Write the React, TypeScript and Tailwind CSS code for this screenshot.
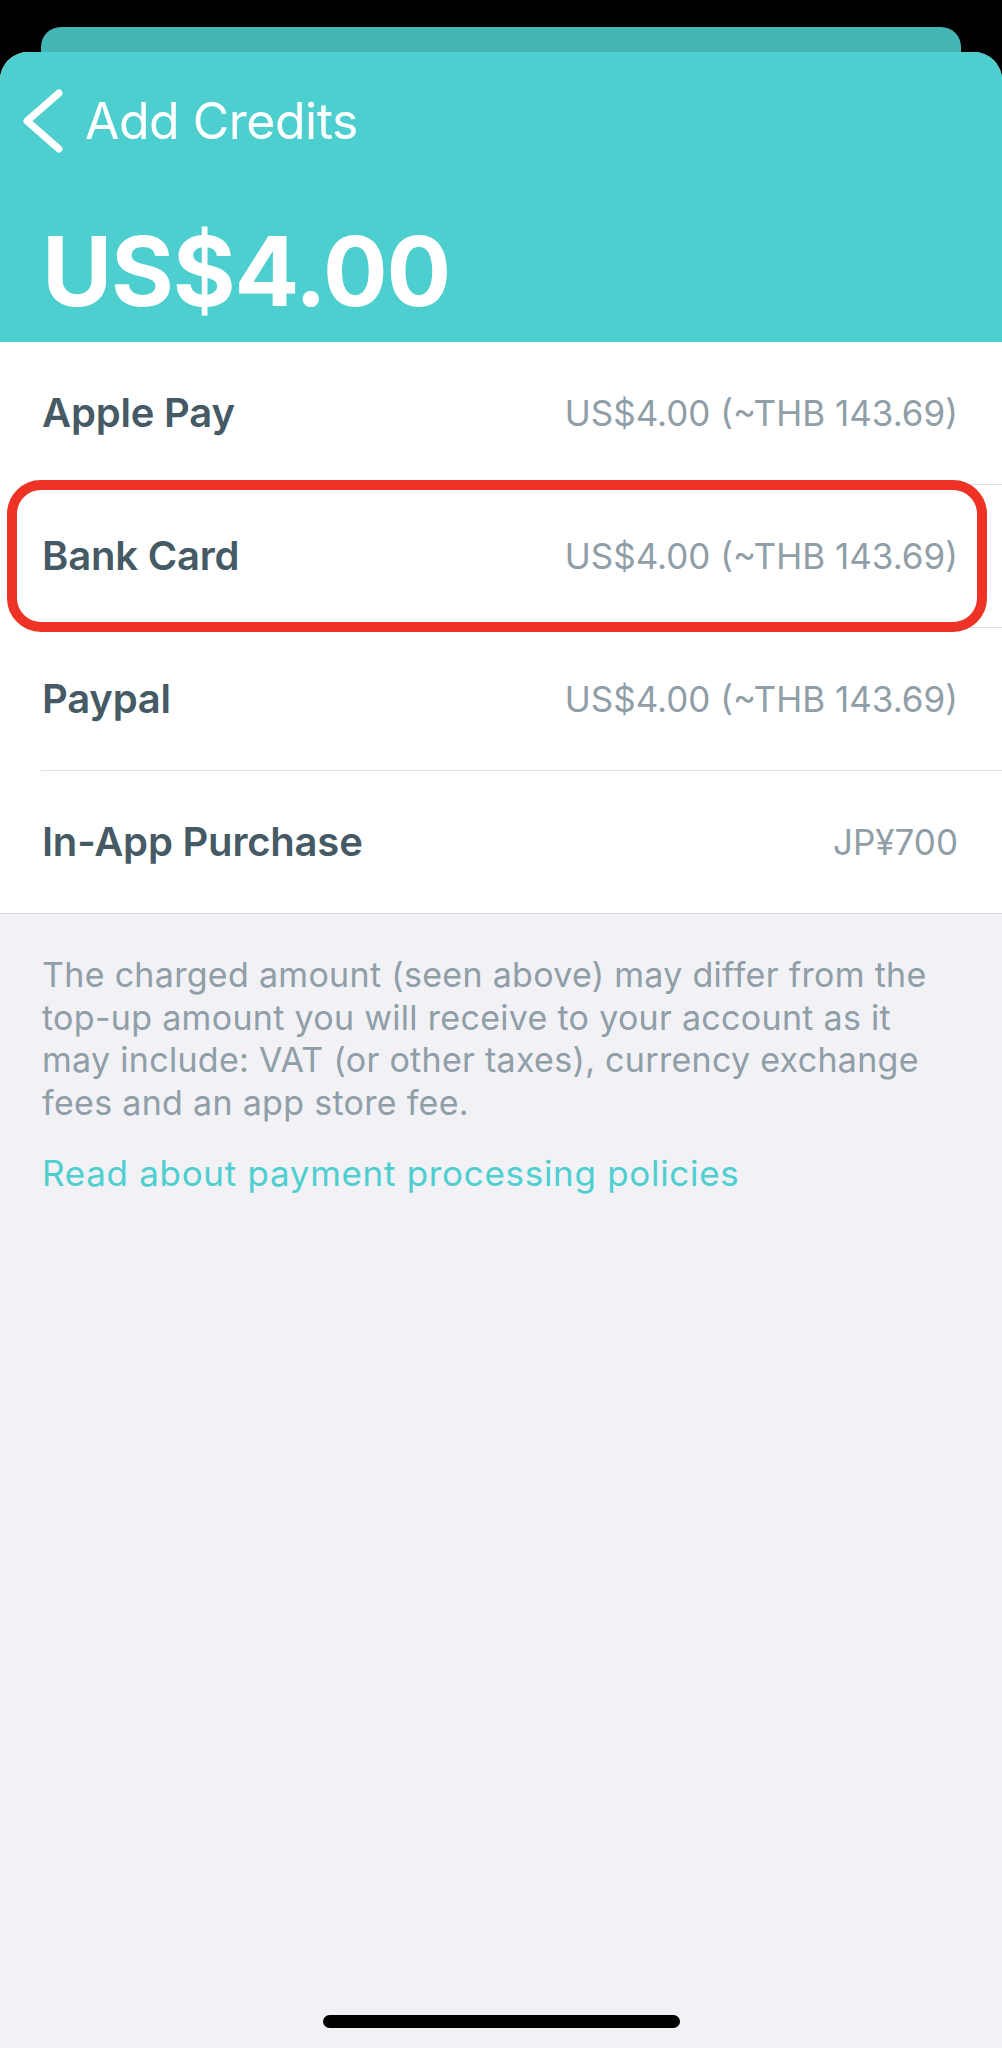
const rows = [
  { label: "Apple Pay", value: "US$4.00 (~THB 143.69)" },
  { label: "Bank Card", value: "US$4.00 (~THB 143.69)", marked: true },
  { label: "Paypal", value: "US$4.00 (~THB 143.69)" },
  { label: "In-App Purchase", value: "JP¥700" },
];

const App = () => {
  return (
    <div className="flex h-[2048px] w-[1002px] flex-col bg-black font-['Inter','Liberation_Sans',sans-serif]">
      {/* Stacked sheet behind */}
      <div className="mx-[41px] mt-[27px] h-[25px] rounded-t-[20px] bg-[#44b6b6]"></div>

      {/* Sheet */}
      <div className="flex flex-1 flex-col overflow-hidden rounded-t-[28px] bg-[#f1f1f6]">
        {/* Header */}
        <div className="flex h-[290px] flex-col bg-[#4dcfd0] text-white">
          <div className="flex items-center pl-[22px] pt-[37px]">
            <svg width="42" height="64" viewBox="0 0 42 64" fill="none">
              <path
                d="M37 4 L5 32 L37 60"
                stroke="white"
                strokeWidth="7"
                strokeLinecap="round"
                strokeLinejoin="round"
              />
            </svg>
            <span className="ml-[21px] text-[50px] leading-none tracking-[-0.5px]">
              Add Credits
            </span>
          </div>
          <div className="mt-[70px] pl-[42px] text-[96px] font-bold leading-none tracking-[-1.2px]">
            US$4.00
          </div>
        </div>

        {/* Payment methods */}
        <div className="border-b border-[#d9dde1] bg-white">
          {rows.map((row, i) => (
            <div key={row.label} className="relative">
              <div className="flex h-[142px] items-center justify-between pl-[42px] pr-[44px]">
                <span className="text-[40px] font-semibold tracking-[-0.2px] text-[#455a64]">
                  {row.label}
                </span>
                <span className="text-[35px] text-[#8f9ea7]">
                  {row.value}
                </span>
              </div>
              {i < rows.length - 1 && (
                <div className="ml-[41px] h-px bg-[#dde0e4]"></div>
              )}
              {row.marked && (
                <div className="absolute left-[7px] right-[15px] top-[-5px] bottom-[-4px] rounded-[34px] border-[10px] border-[#ee3326]"></div>
              )}
            </div>
          ))}
        </div>

        {/* Footer note */}
        <div className="px-[42px] pt-[40px]">
          <p className="text-[34px] leading-[42.5px] tracking-[0.3px] text-[#8f9ea7]">
            <span className="block">The charged amount (seen above) may differ from the</span>
            <span className="block">top-up amount you will receive to your account as it</span>
            <span className="block">may include: VAT (or other taxes), currency exchange</span>
            <span className="block">fees and an app store fee.</span>
          </p>
          <p className="mt-[28px] text-[35px] leading-[42px] tracking-[0.7px] text-[#4dcfd0]">
            Read about payment processing policies
          </p>
        </div>

        {/* Home indicator */}
        <div className="mt-auto flex justify-center pb-[20px]">
          <div className="h-[13px] w-[357px] rounded-full bg-black"></div>
        </div>
      </div>
    </div>
  );
};

export default App;
